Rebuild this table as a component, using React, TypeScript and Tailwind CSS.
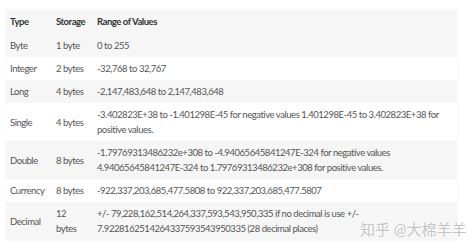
import React from "react";

type Row = { t: React.ReactNode; s: React.ReactNode; r: React.ReactNode; gray: boolean };

const rows: Row[] = [
  { t: "Byte", s: "1 byte", r: "0 to 255", gray: true },
  { t: "Integer", s: "2 bytes", r: "-32,768 to 32,767", gray: false },
  { t: "Long", s: "4 bytes", r: "-2,147,483,648 to 2,147,483,648", gray: true },
  {
    t: "Single",
    s: "4 bytes",
    r: (
      <>
        -3.402823E+38 to -1.401298E-45 for negative values 1.401298E-45 to 3.402823E+38 for
        <br />
        positive values.
      </>
    ),
    gray: false,
  },
  {
    t: "Double",
    s: "8 bytes",
    r: (
      <>
        -1.79769313486232e+308 to -4.94065645841247E-324 for negative values
        <br />
        4.94065645841247E-324 to 1.79769313486232e+308 for positive values.
      </>
    ),
    gray: true,
  },
  { t: "Currency", s: "8 bytes", r: "-922,337,203,685,477.5808 to 922,337,203,685,477.5807", gray: false },
  {
    t: "Decimal",
    s: (
      <>
        12
        <br />
        bytes
      </>
    ),
    r: (
      <>
        +/- 79,228,162,514,264,337,593,543,950,335 if no decimal is use +/-
        <br />
        7.9228162514264337593543950335 (28 decimal places)
      </>
    ),
    gray: true,
  },
];

export default function App() {
  return (
    <div
      className="relative w-[474px] h-[249px] bg-white overflow-hidden"
      style={{ fontFamily: "Lato, 'Noto Sans CJK SC', sans-serif" }}
    >
      <div className="pt-[10px] pl-[6px]">
        <div className="w-[451px] text-[9.5px] tracking-[-0.45px] leading-[15px] text-[#555] shadow-[0_0_3px_rgba(0,0,0,0.06)]">
          <div className="grid grid-cols-[46px_41px_1fr] items-center bg-[#f6f6f6] py-[4px] font-bold text-[#333] border-b border-[#fbfbfb]">
            <div className="pl-[4px]">Type</div>
            <div className="pl-[4px]">Storage</div>
            <div className="pl-[4px]">Range of Values</div>
          </div>
          {rows.map((row, i) => (
            <div
              key={i}
              className={`grid grid-cols-[46px_41px_1fr] items-center py-[4px] ${row.gray ? "bg-[#f6f6f6]" : "bg-white"}`}
            >
              <div className="pl-[4px]">{row.t}</div>
              <div className="pl-[4px]">{row.s}</div>
              <div className="pl-[4px] whitespace-nowrap">{row.r}</div>
            </div>
          ))}
        </div>
      </div>
      <div
        className="absolute left-[360px] top-[220px] text-[15px] leading-[18px] text-[#c4c4c4] whitespace-nowrap"
        style={{ textShadow: "0 0 2px #fff, 0 0 2px #fff" }}
      >
        知乎 @大棉羊羊
      </div>
    </div>
  );
}
